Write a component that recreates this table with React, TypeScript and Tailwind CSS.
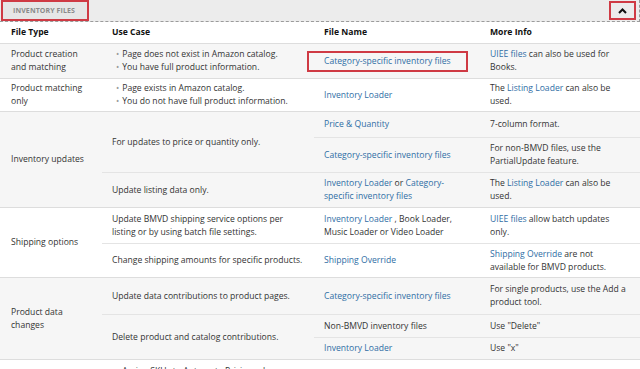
import React from 'react';

const FONT = "font-['Open_Sans',_'Noto_Sans',_sans-serif]";

const Link: React.FC<{ children: React.ReactNode }> = ({ children }) => (
  <span className="text-[#2f6ea5]">{children}</span>
);

const Bullets: React.FC<{ items: string[] }> = ({ items }) => (
  <ul className="pl-[4px]">
    {items.map(item => (
      <li key={item} className="flex gap-[3px]">
        <span className="text-[#9a9a9a]">•</span>
        <span>{item}</span>
      </li>
    ))}
  </ul>
);

// one table cell; line = top border for sub-rows inside a group
const Cell: React.FC<{ className?: string; line?: boolean; children?: React.ReactNode }> = ({
  className = '',
  line,
  children,
}) => (
  <div className={`flex items-center pl-[10px] pr-[4px] whitespace-nowrap ${line ? 'border-t border-[#e4e4e4]' : ''} ${className}`}>
    <div>{children}</div>
  </div>
);

const COLS = 'grid grid-cols-[102px_212px_166px_1fr]';

export default function App() {
  return (
    <div className={`w-[640px] bg-white text-[8.6px] leading-[13px] text-[#333] ${FONT}`}>
      {/* collapsible section bar */}
      <div className="flex h-[22px] items-stretch justify-between border-b border-r border-dashed border-[#9b9b9b] bg-[#ececec]">
        <div className="ml-[1px] flex w-[88px] items-center border-2 border-[#cf3a44] bg-[#e6e6e6] pl-[10px]">
          <span className="text-[7px] font-bold tracking-[0.1px] text-[#8a8a8a]">INVENTORY FILES</span>
        </div>
        <div className="mr-[3px] mt-[1px] mb-[1px] flex w-[27px] items-center justify-center border-2 border-[#cf3a44]">
          <svg width="9" height="6" viewBox="0 0 9 6">
            <polyline points="1,5 4.5,1.5 8,5" fill="none" stroke="#111" strokeWidth="2" />
          </svg>
        </div>
      </div>

      {/* header row */}
      <div className={`${COLS} h-[22px] border-b border-[#dddddd] font-bold text-[#111]`}>
        <div className="flex items-center pl-[11px]">File Type</div>
        <Cell>Use Case</Cell>
        <Cell>File Name</Cell>
        <Cell>More Info</Cell>
      </div>

      {/* product creation */}
      <div className={`${COLS} h-[35px] border-b border-[#dddddd] bg-[#f6f6f6]`}>
        <div className="flex items-center pl-[11px]">Product creation<br />and matching</div>
        <Cell><Bullets items={['Page does not exist in Amazon catalog.', 'You have full product information.']} /></Cell>
        <Cell>
          <span className="-ml-[17px] inline-block border-2 border-[#cf3a44] px-[15px] py-[2px]">
            <Link>Category-specific inventory files</Link>
          </span>
        </Cell>
        <Cell><Link>UIEE files</Link> can also be used for<br />Books.</Cell>
      </div>

      {/* product matching */}
      <div className={`${COLS} h-[33px] border-b border-[#dddddd]`}>
        <div className="flex items-center pl-[11px]">Product matching<br />only</div>
        <Cell><Bullets items={['Page exists in Amazon catalog.', 'You do not have full product information.']} /></Cell>
        <Cell><Link>Inventory Loader</Link></Cell>
        <Cell>The <Link>Listing Loader</Link> can also be<br />used.</Cell>
      </div>

      {/* inventory updates */}
      <div className={`${COLS} grid-rows-[25px_35px_35px] border-b border-[#dddddd] bg-[#f6f6f6]`}>
        <div className="row-span-3 flex items-center pl-[11px]">Inventory updates</div>
        <Cell className="row-span-2">For updates to price or quantity only.</Cell>
        <Cell><Link>Price &amp; Quantity</Link></Cell>
        <Cell>7-column format.</Cell>
        <Cell line><Link>Category-specific inventory files</Link></Cell>
        <Cell line>For non-BMVD files, use the<br />PartialUpdate feature.</Cell>
        <Cell line>Update listing data only.</Cell>
        <Cell line><Link>Inventory Loader</Link> or <Link>Category-<br />specific inventory files</Link></Cell>
        <Cell line>The <Link>Listing Loader</Link> can also be<br />used.</Cell>
      </div>

      {/* shipping options */}
      <div className={`${COLS} grid-rows-[35px_34px] border-b border-[#dddddd]`}>
        <div className="row-span-2 flex items-center pl-[11px]">Shipping options</div>
        <Cell>Update BMVD shipping service options per<br />listing or by using batch file settings.</Cell>
        <Cell><Link>Inventory Loader</Link> , Book Loader,<br />Music Loader or Video Loader</Cell>
        <Cell><Link>UIEE files</Link> allow batch updates<br />only.</Cell>
        <Cell line>Change shipping amounts for specific products.</Cell>
        <Cell line><Link>Shipping Override</Link></Cell>
        <Cell line><Link>Shipping Override</Link> are not<br />available for BMVD products.</Cell>
      </div>

      {/* product data changes */}
      <div className={`${COLS} grid-rows-[36px_23px_22px] border-b border-[#dddddd] bg-[#f6f6f6]`}>
        <div className="row-span-3 flex items-center pl-[11px]">Product data<br />changes</div>
        <Cell>Update data contributions to product pages.</Cell>
        <Cell><Link>Category-specific inventory files</Link></Cell>
        <Cell>For single products, use the Add a<br />product tool.</Cell>
        <Cell line className="row-span-2">Delete product and catalog contributions.</Cell>
        <Cell line>Non-BMVD inventory files</Cell>
        <Cell line>Use "Delete"</Cell>
        <Cell line><Link>Inventory Loader</Link></Cell>
        <Cell line>Use "x"</Cell>
      </div>

      {/* automate pricing */}
      <div className={`${COLS} h-[60px]`}>
        <div className="flex items-center pl-[11px]">Pricing</div>
        <div className="pl-[10px] pt-[5px]">
          <Bullets items={['Assign SKUs to Automate Pricing rules.', 'Update minimum and maximum prices.', 'Pause or resume pricing rules.']} />
        </div>
        <Cell><Link>Automate Pricing</Link></Cell>
        <Cell>Use the rule template.</Cell>
      </div>
    </div>
  );
}
